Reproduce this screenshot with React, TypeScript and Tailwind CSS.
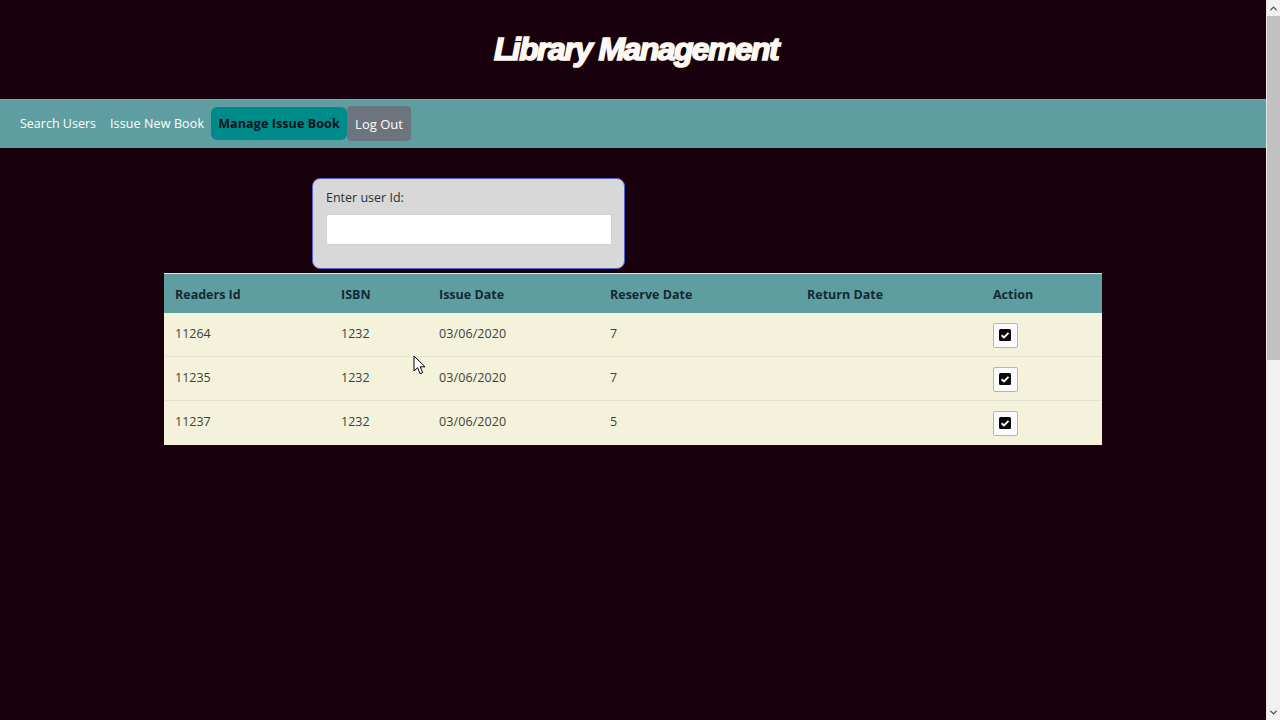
import { ChevronDown, ChevronUp } from 'lucide-react';

const rows = [
  { id: '11264', isbn: '1232', issued: '03/06/2020', reserve: '7' },
  { id: '11235', isbn: '1232', issued: '03/06/2020', reserve: '7' },
  { id: '11237', isbn: '1232', issued: '03/06/2020', reserve: '5' },
];

const headers = ['Readers Id', 'ISBN', 'Issue Date', 'Reserve Date', 'Return Date', 'Action'];

function CheckButton() {
  return (
    <button className="flex h-[25px] w-[25px] items-center justify-center rounded-[2px] border border-[#b5b5b5] bg-[#fbfbfb] pr-[1px]">
      <svg width="12" height="12" viewBox="0 0 12 12">
        <rect width="12" height="12" rx="1.5" fill="#0a0a0a" />
        <path d="M2.6 6.2 5 8.5 9.5 3.9" fill="none" stroke="#fff" strokeWidth="1.9" />
      </svg>
    </button>
  );
}

export default function App() {
  return (
    <div className="relative flex h-[720px] w-[1280px] overflow-hidden bg-[#19000d] font-['Open_Sans',sans-serif]">
      <div className="w-[1266px]">
        <header className="flex h-[99px] items-center justify-center">
          <h1 className="mb-[2px] ml-[6px] text-[32px] font-bold italic tracking-[-1.6px] text-[#fdf8f2] [-webkit-text-stroke:1.6px_#fdf8f2] font-['Liberation_Sans',sans-serif]">
            Library Management
          </h1>
        </header>

        <nav className="flex h-[49px] items-center bg-[#5f9ea0] pl-[20px] text-[12.5px] text-white shadow-[inset_0_1px_0_#7aa9ab]">
          <a className="w-[76px] whitespace-nowrap pt-[2px]">Search Users</a>
          <a className="ml-[14px] w-[94px] whitespace-nowrap pt-[2px] tracking-[0.12px]">Issue New Book</a>
          <a className="ml-[7px] flex h-[33px] w-[136px] items-center justify-center rounded-[6px] bg-[#008b8b] pt-[2px] font-bold tracking-[0.1px] text-[#06131a]">
            Manage Issue Book
          </a>
          <button className="flex h-[35px] w-[64px] items-center justify-center rounded-[4px] bg-[#6c757d] pt-[3px] text-[13px] text-white">
            Log Out
          </button>
        </nav>

        <div className="ml-[312px] mt-[30px] h-[91px] w-[313px] rounded-[8px] border border-[#5a5fd0] bg-[#d8d8d8] px-[13px] pt-[10px]">
          <label className="block text-[12.5px] leading-[18px] text-[#2b2f33]">Enter user Id:</label>
          <input className="mt-[7px] block h-[31px] w-[286px] rounded-[2px] border border-[#cfd2d6] bg-white" />
        </div>

        <table className="ml-[164px] mt-[4px] w-[938px] table-fixed border-separate border-spacing-0 text-left text-[12.5px]">
          <colgroup>
            <col className="w-[166px]" />
            <col className="w-[98px]" />
            <col className="w-[171px]" />
            <col className="w-[197px]" />
            <col className="w-[186px]" />
            <col className="w-[120px]" />
          </colgroup>
          <thead>
            <tr className="bg-[#5f9ea0] text-[#142a33]">
              {headers.map((h) => (
                <th key={h} className="h-[40px] border-t border-[#dfe6e6] px-[11px] pt-[4px] font-bold">{h}</th>
              ))}
            </tr>
          </thead>
          <tbody className="bg-[#f5f2dc] text-[#3a3f3f]">
            {rows.map((r, i) => {
              const line = i < 2 ? 'border-[#e6e4d0]' : 'border-[#f5f2dc]';
              return (
                <tr key={r.id}>
                  <td className={`h-[44px] border-b px-[11px] pb-[1px] ${line}`}>{r.id}</td>
                  <td className={`h-[44px] border-b px-[11px] pb-[1px] ${line}`}>{r.isbn}</td>
                  <td className={`h-[44px] border-b px-[11px] pb-[1px] tracking-[0.1px] ${line}`}>{r.issued}</td>
                  <td className={`h-[44px] border-b px-[11px] pb-[1px] ${line}`}>{r.reserve}</td>
                  <td className={`h-[44px] border-b px-[11px] ${line}`}></td>
                  <td className={`h-[44px] border-b px-[11px] pt-[1px] ${line}`}><CheckButton /></td>
                </tr>
              );
            })}
          </tbody>
        </table>
      </div>

      <div className="flex w-[14px] flex-col border-l border-[#e8e8e8] bg-[#f1f1f1]">
        <div className="flex h-[16px] items-center justify-center">
          <ChevronUp size={11} strokeWidth={3} className="text-[#505050]" />
        </div>
        <div className="h-[344px] bg-[#c1c1c1]" />
        <div className="flex-1" />
        <div className="flex h-[16px] items-center justify-center">
          <ChevronDown size={11} strokeWidth={3} className="text-[#505050]" />
        </div>
      </div>

      <svg className="absolute left-[413px] top-[355px]" width="13" height="20" viewBox="0 0 13 20">
        <path d="M1 1v15l3.6-3.3 2.5 6 2.6-1.1-2.5-5.8h4.8z" fill="#fff" stroke="#000" strokeWidth="1" />
      </svg>
    </div>
  );
}
